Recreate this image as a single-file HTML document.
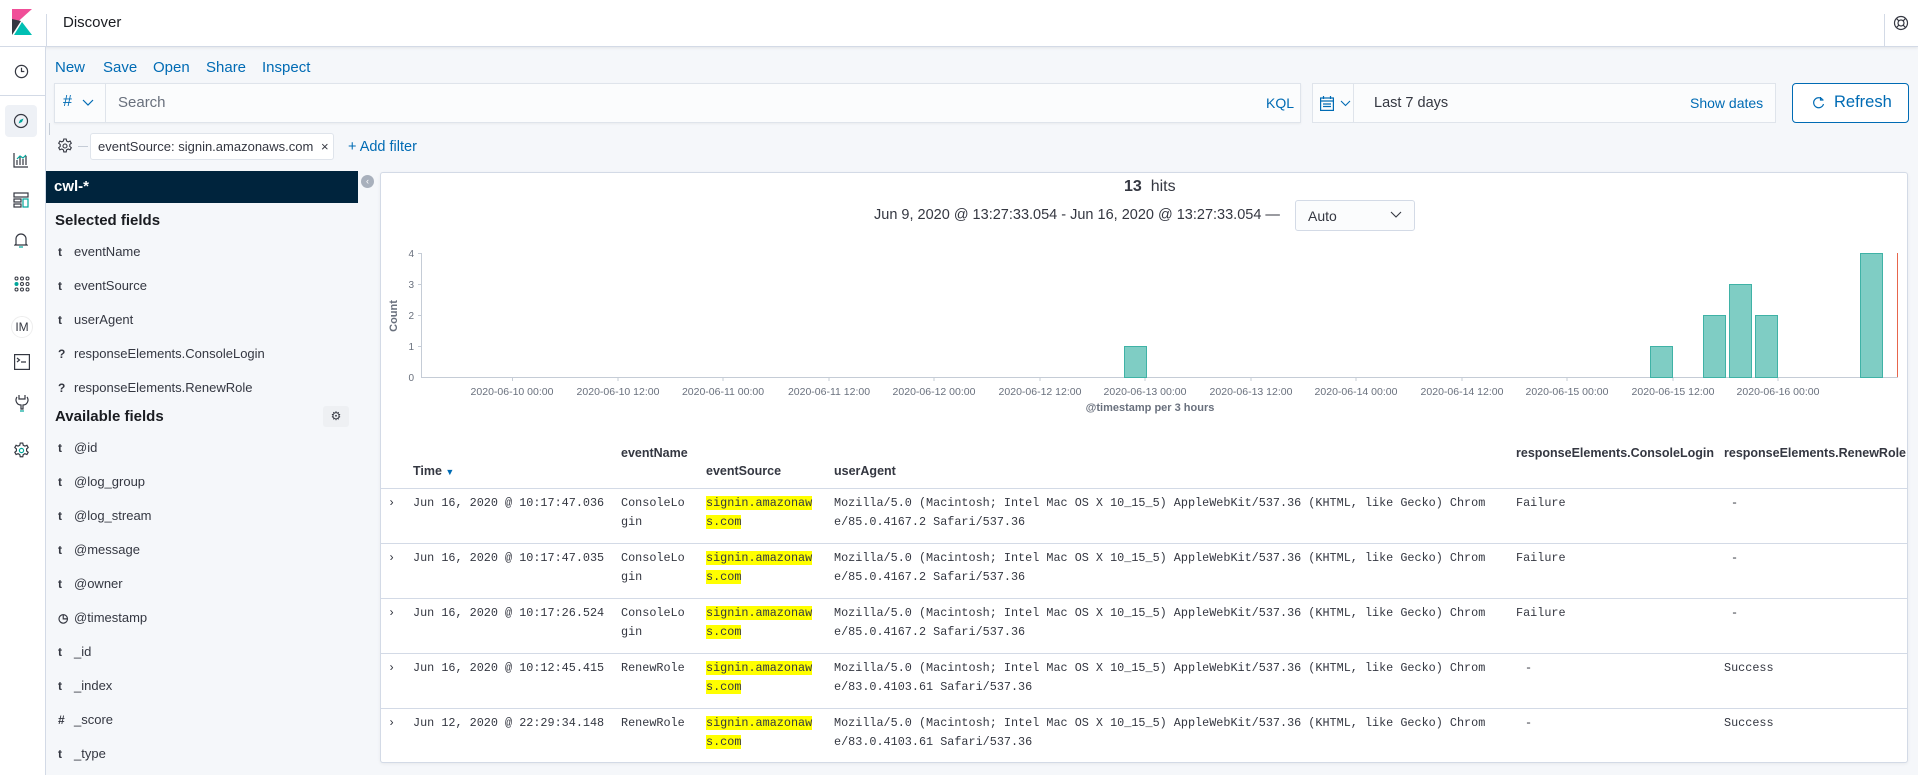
<!DOCTYPE html>
<html><head><meta charset="utf-8"><style>
*{box-sizing:border-box;margin:0;padding:0}
body{width:1918px;height:775px;overflow:hidden;background:#f5f7fa;font-family:"Liberation Sans",sans-serif;color:#343741;position:relative}
.abs{position:absolute}
.hdr{left:0;top:0;width:1918px;height:47px;background:#fff;border-bottom:1px solid #d3dae6;box-shadow:0 1px 3px rgba(0,0,0,.08)}
.nav{left:0;top:47px;width:46px;height:728px;background:#fff;border-right:1px solid #d3dae6}
.link{color:#006bb4;font-size:15px}
.mono{font-family:"Liberation Mono",monospace;font-size:11.8px;line-height:19px;color:#343741}
.hl{background:#ffff00}
.fld{left:58px;font-size:13px;color:#343741}
.fld b{display:inline-block;width:16px;font-size:12px}
.th{font-size:12.5px;font-weight:bold;color:#343741}
.line{height:1px;background:#d3dae6;left:381px;width:1526px}
</style></head><body>
<div class="abs hdr"></div>
<svg class="abs" style="left:12px;top:9px" width="20" height="26" viewBox="0 0 20 26"><polygon points="0,0 20,0 0,18" fill="#f04e98"/><polygon points="0,10 9,12 0,26" fill="#343741"/><polygon points="2,26 20,26 10,13" fill="#00bfb3"/></svg>
<div class="abs" style="left:46px;top:14px;width:1px;height:33px;background:#d3dae6"></div>
<div class="abs" style="left:63px;top:14px;font-size:15px;color:#1a1c21">Discover</div>
<div class="abs" style="left:1884px;top:14px;width:1px;height:33px;background:#d3dae6"></div>
<svg class="abs" style="left:1893px;top:15px" width="16" height="16" viewBox="0 0 16 16" fill="none" stroke="#343741" stroke-width="1.2"><circle cx="8" cy="8" r="6.5"/><circle cx="8" cy="8" r="3"/><path d="M3.5 3.5l2.4 2.4M12.5 3.5l-2.4 2.4M3.5 12.5l2.4-2.4M12.5 12.5l-2.4-2.4"/></svg>

<div class="abs nav"></div>
<div class="abs" style="left:0;top:95px;width:46px;height:1px;background:#d3dae6"></div>
<svg class="abs" style="left:14px;top:64px" width="15" height="15" viewBox="0 0 16 16" fill="none" stroke="#343741" stroke-width="1.3"><circle cx="8" cy="8" r="6.5"/><path d="M8 4v4h3"/></svg>
<div class="abs" style="left:5px;top:105px;width:32px;height:32px;background:#eef1f6;border-radius:4px"></div>
<svg class="abs" style="left:13px;top:113px" width="16" height="16" viewBox="0 0 16 16" fill="none" stroke="#343741" stroke-width="1.2"><circle cx="8" cy="8" r="6.5"/><path d="M10.5 5.5L7 7l-1.5 3.5L9 9z" fill="#00a69b" stroke="none"/></svg>
<svg class="abs" style="left:13px;top:152px" width="16" height="16" viewBox="0 0 16 16" fill="none" stroke="#343741" stroke-width="1.2"><path d="M1 1v14h14"/><path d="M4 13V8M7 13V5M10 13V7M13 13V4" stroke="#343741"/><path d="M4 7l3-3 3 2 3-3" stroke="#00a69b"/></svg>
<svg class="abs" style="left:13px;top:192px" width="16" height="16" viewBox="0 0 16 16" fill="none" stroke="#343741" stroke-width="1.2"><rect x="1" y="1" width="14" height="4"/><rect x="1" y="7" width="7" height="3"/><rect x="1" y="12" width="7" height="3"/><rect x="10" y="7" width="5" height="8" stroke="#00a69b"/></svg>
<svg class="abs" style="left:14px;top:232px" width="14" height="17" viewBox="0 0 14 17" fill="none" stroke="#343741" stroke-width="1.2"><path d="M2 12V7a5 5 0 0110 0v5l1 1H1z"/><path d="M5 15h4" stroke="#00a69b"/></svg>
<svg class="abs" style="left:14px;top:276px" width="16" height="16" viewBox="0 0 16 16" fill="none" stroke="#343741" stroke-width="1"><circle cx="2.5" cy="2.5" r="1.5"/><circle cx="8" cy="2.5" r="1.5"/><circle cx="13.5" cy="2.5" r="1.5"/><circle cx="2.5" cy="8" r="1.5" fill="#00a69b" stroke="#00a69b"/><circle cx="8" cy="8" r="1.5"/><circle cx="13.5" cy="8" r="1.5"/><circle cx="2.5" cy="13.5" r="1.5"/><circle cx="8" cy="13.5" r="1.5"/><circle cx="13.5" cy="13.5" r="1.5"/></svg>
<div class="abs" style="left:11px;top:316px;width:22px;height:22px;border-radius:50%;background:#fff;border:1px solid #eee;font-size:12px;text-align:center;line-height:21px;color:#343741">IM</div>
<svg class="abs" style="left:14px;top:354px" width="16" height="16" viewBox="0 0 16 16" fill="none" stroke="#343741" stroke-width="1.2"><rect x=".6" y=".6" width="14.8" height="14.8"/><path d="M3 4l2.5 2L3 8M7 8h5"/></svg>
<svg class="abs" style="left:15px;top:394px" width="14" height="18" viewBox="0 0 14 18" fill="none" stroke="#343741" stroke-width="1.2"><path d="M4 1v4h6V1M2 3a5 5 0 004 8v4h2v-4a5 5 0 004-8"/><path d="M5 17h4" stroke="#00a69b"/></svg>
<svg class="abs" style="left:13px;top:442px" width="17" height="17" viewBox="0 0 16 16" fill="none" stroke="#343741" stroke-width="1.1"><path d="M6.8 1h2.4l.4 2 1.6.9 1.9-.8 1.2 2.1-1.5 1.3v1.9l1.5 1.3-1.2 2.1-1.9-.8-1.6.9-.4 2H6.8l-.4-2-1.6-.9-1.9.8-1.2-2.1 1.5-1.3V6.5L1.7 5.2l1.2-2.1 1.9.8 1.6-.9z"/><circle cx="8" cy="8" r="2" stroke="#00a69b"/></svg>

<div class="abs link" style="left:55px;top:59px">New</div>
<div class="abs link" style="left:103px;top:59px">Save</div>
<div class="abs link" style="left:153px;top:59px">Open</div>
<div class="abs link" style="left:206px;top:59px">Share</div>
<div class="abs link" style="left:262px;top:59px">Inspect</div>

<div class="abs" style="left:54px;top:83px;width:1247px;height:40px;background:#fbfcfd;border:1px solid #dfe4eb;box-shadow:0 1px 2px rgba(0,0,0,.05)"></div>
<div class="abs" style="left:105px;top:83px;width:1px;height:40px;background:#dfe4eb"></div>
<div class="abs" style="left:63px;top:93px;font-size:16px;color:#006bb4">#</div>
<svg class="abs" style="left:82px;top:99px" width="12" height="8" viewBox="0 0 12 8" fill="none" stroke="#006bb4" stroke-width="1.2"><path d="M1 1l5 5 5-5"/></svg>
<div class="abs" style="left:118px;top:94px;font-size:15px;color:#69707d">Search</div>
<div class="abs link" style="left:1266px;top:95px;font-size:14px">KQL</div>
<div class="abs" style="left:1312px;top:83px;width:464px;height:40px;background:#fbfcfd;border:1px solid #dfe4eb"></div>
<div class="abs" style="left:1353px;top:83px;width:1px;height:40px;background:#dfe4eb"></div>
<svg class="abs" style="left:1320px;top:96px" width="14" height="15" viewBox="0 0 14 15" fill="none" stroke="#006bb4" stroke-width="1.2"><rect x=".6" y="2" width="12.8" height="12.4"/><path d="M.6 5h12.8M3.5 0v3M10.5 0v3M3 8h8M3 10.5h8"/></svg>
<svg class="abs" style="left:1340px;top:100px" width="11" height="7" viewBox="0 0 11 7" fill="none" stroke="#006bb4" stroke-width="1.1"><path d="M1 1l4.5 4.5L10 1"/></svg>
<div class="abs" style="left:1374px;top:95px;font-size:14.5px;color:#343741">Last 7 days</div>
<div class="abs link" style="left:1690px;top:95px;font-size:14px">Show dates</div>
<div class="abs" style="left:1792px;top:83px;width:117px;height:40px;background:#fff;border:1px solid #006bb4;border-radius:4px"></div>
<svg class="abs" style="left:1812px;top:96px" width="13" height="14" viewBox="0 0 13 14" fill="none" stroke="#006bb4" stroke-width="1.2"><path d="M10.5 3.5A5 5 0 1011.5 8"/><path d="M8.5 1v3h3"/></svg>
<div class="abs" style="left:1834px;top:93px;font-size:16.5px;color:#006bb4">Refresh</div>

<div class="abs" style="left:49px;top:123px;width:1px;height:12px;background:#c5ccd6"></div>
<svg class="abs" style="left:57px;top:138px" width="16" height="16" viewBox="0 0 16 16" fill="none" stroke="#343741" stroke-width="1.1"><path d="M6.8 1h2.4l.4 2 1.6.9 1.9-.8 1.2 2.1-1.5 1.3v1.9l1.5 1.3-1.2 2.1-1.9-.8-1.6.9-.4 2H6.8l-.4-2-1.6-.9-1.9.8-1.2-2.1 1.5-1.3V6.5L1.7 5.2l1.2-2.1 1.9.8 1.6-.9z"/><circle cx="8" cy="8" r="2"/></svg>
<div class="abs" style="left:78px;top:146px;width:10px;height:1px;background:#c5ccd6"></div>
<div class="abs" style="left:90px;top:133px;width:244px;height:27px;background:#fff;border:1px solid #dfe4eb;border-radius:3px;font-size:13px;line-height:25px;padding-left:7px;color:#343741">eventSource: signin.amazonaws.com <span style="margin-left:4px">×</span></div>
<div class="abs link" style="left:348px;top:139px;font-size:14.5px">+ Add filter</div>

<div class="abs" style="left:46px;top:171px;width:312px;height:32px;background:#00243d;color:#fff;font-weight:bold;font-size:15px;line-height:32px;padding-left:8px">cwl-*</div>
<div class="abs" style="left:55px;top:212px;font-size:15px;font-weight:bold;color:#1a1c21">Selected fields</div>
<div class="abs fld" style="top:244px"><b>t</b>eventName</div>
<div class="abs fld" style="top:278px"><b>t</b>eventSource</div>
<div class="abs fld" style="top:312px"><b>t</b>userAgent</div>
<div class="abs fld" style="top:346px"><b>?</b>responseElements.ConsoleLogin</div>
<div class="abs fld" style="top:380px"><b>?</b>responseElements.RenewRole</div>
<div class="abs" style="left:55px;top:408px;font-size:15px;font-weight:bold;color:#1a1c21">Available fields</div>
<div class="abs" style="left:323px;top:406px;width:26px;height:21px;background:#eef0f3;border-radius:3px;text-align:center;font-size:12px;line-height:21px">⚙</div>
<div class="abs fld" style="top:440px"><b>t</b>@id</div>
<div class="abs fld" style="top:474px"><b>t</b>@log_group</div>
<div class="abs fld" style="top:508px"><b>t</b>@log_stream</div>
<div class="abs fld" style="top:542px"><b>t</b>@message</div>
<div class="abs fld" style="top:576px"><b>t</b>@owner</div>
<div class="abs fld" style="top:610px"><b>◷</b>@timestamp</div>
<div class="abs fld" style="top:644px"><b>t</b>_id</div>
<div class="abs fld" style="top:678px"><b>t</b>_index</div>
<div class="abs fld" style="top:712px"><b>#</b>_score</div>
<div class="abs fld" style="top:746px"><b>t</b>_type</div>
<div class="abs" style="left:361px;top:175px;width:13px;height:13px;border-radius:50%;background:#a8b0bc;color:#fff;font-size:9px;text-align:center;line-height:13px">‹</div>

<div class="abs" style="left:380px;top:172px;width:1528px;height:591px;background:#fff;border:1px solid #d3dae6;border-radius:3px;box-shadow:0 1px 3px rgba(0,0,0,.06)"></div>
<div class="abs" style="left:1124px;top:178px;font-size:16px;color:#343741"><b>13</b>&nbsp; hits</div>
<div class="abs" style="left:874px;top:207px;font-size:14.5px;color:#343741">Jun 9, 2020 @ 13:27:33.054 - Jun 16, 2020 @ 13:27:33.054 —</div>
<div class="abs" style="left:1295px;top:200px;width:120px;height:31px;background:#fbfcfd;border:1px solid #d3dae6;border-radius:3px;font-size:14px;line-height:30px;padding-left:12px">Auto</div>
<svg class="abs" style="left:1390px;top:211px" width="12" height="8" viewBox="0 0 12 8" fill="none" stroke="#343741" stroke-width="1.1"><path d="M1 1l5 5 5-5"/></svg>

<svg class="abs" style="left:380px;top:240px" width="1528" height="180" viewBox="380 240 1528 180" font-family="Liberation Sans, sans-serif">
<g stroke="#c5ccd6" stroke-width="1"><line x1="421.5" y1="253" x2="421.5" y2="377"/><line x1="421" y1="377.5" x2="1898" y2="377.5"/>
<line x1="418" y1="253.5" x2="421" y2="253.5"/><line x1="418" y1="284.5" x2="421" y2="284.5"/><line x1="418" y1="315.5" x2="421" y2="315.5"/><line x1="418" y1="346.5" x2="421" y2="346.5"/>
<g><line x1="512.5" y1="377" x2="512.5" y2="381"/><line x1="618" y1="377" x2="618" y2="381"/><line x1="723" y1="377" x2="723" y2="381"/><line x1="829" y1="377" x2="829" y2="381"/><line x1="934" y1="377" x2="934" y2="381"/><line x1="1040" y1="377" x2="1040" y2="381"/><line x1="1145" y1="377" x2="1145" y2="381"/><line x1="1251" y1="377" x2="1251" y2="381"/><line x1="1356" y1="377" x2="1356" y2="381"/><line x1="1462" y1="377" x2="1462" y2="381"/><line x1="1567" y1="377" x2="1567" y2="381"/><line x1="1673" y1="377" x2="1673" y2="381"/><line x1="1778" y1="377" x2="1778" y2="381"/></g></g>
<g font-size="10" fill="#69707d" text-anchor="end"><text x="414" y="257">4</text><text x="414" y="288">3</text><text x="414" y="319">2</text><text x="414" y="350">1</text><text x="414" y="381">0</text></g>
<text transform="translate(397,316) rotate(-90)" font-size="11" font-weight="bold" fill="#69707d" text-anchor="middle">Count</text>
<g font-size="10.5" fill="#69707d" text-anchor="middle"><text x="512" y="395">2020-06-10 00:00</text><text x="618" y="395">2020-06-10 12:00</text><text x="723" y="395">2020-06-11 00:00</text><text x="829" y="395">2020-06-11 12:00</text><text x="934" y="395">2020-06-12 00:00</text><text x="1040" y="395">2020-06-12 12:00</text><text x="1145" y="395">2020-06-13 00:00</text><text x="1251" y="395">2020-06-13 12:00</text><text x="1356" y="395">2020-06-14 00:00</text><text x="1462" y="395">2020-06-14 12:00</text><text x="1567" y="395">2020-06-15 00:00</text><text x="1673" y="395">2020-06-15 12:00</text><text x="1778" y="395">2020-06-16 00:00</text></g>
<text x="1150" y="411" font-size="11" font-weight="bold" fill="#69707d" text-anchor="middle">@timestamp per 3 hours</text>
<g fill="#7fcdc4" stroke="#3fb2a6" stroke-width="1"><rect x="1124.5" y="346.5" width="22" height="31"/><rect x="1650.5" y="346.5" width="22" height="31"/><rect x="1703.5" y="315.5" width="22" height="62"/><rect x="1729.5" y="284.5" width="22" height="93"/><rect x="1755.5" y="315.5" width="22" height="62"/><rect x="1860.5" y="253.5" width="22" height="124"/></g>
<line x1="1897.5" y1="253" x2="1897.5" y2="377" stroke="#e7664c" stroke-width="1"/>
</svg>

<div class="abs th" style="left:413px;top:464px">Time <span style="color:#006bb4;font-size:9px">▼</span></div>
<div class="abs th" style="left:621px;top:446px">eventName</div>
<div class="abs th" style="left:706px;top:464px">eventSource</div>
<div class="abs th" style="left:834px;top:464px">userAgent</div>
<div class="abs th" style="left:1516px;top:446px">responseElements.ConsoleLogin</div>
<div class="abs th" style="left:1724px;top:446px">responseElements.RenewRole</div>
<div class="abs line" style="top:488px"></div>
<div class="abs line" style="top:543px"></div>
<div class="abs line" style="top:598px"></div>
<div class="abs line" style="top:653px"></div>
<div class="abs line" style="top:708px"></div>

<div class="abs mono" style="left:388px;top:494px;width:1520px;height:50px">
<span class="abs" style="left:0">›</span><span class="abs" style="left:25px">Jun 16, 2020 @ 10:17:47.036</span><span class="abs" style="left:233px">ConsoleLo<br>gin</span><span class="abs" style="left:318px"><span class="hl">signin.amazonaw</span><br><span class="hl">s.com</span></span><span class="abs" style="left:446px">Mozilla/5.0 (Macintosh; Intel Mac OS X 10_15_5) AppleWebKit/537.36 (KHTML, like Gecko) Chrom<br>e/85.0.4167.2 Safari/537.36</span><span class="abs" style="left:1128px">Failure</span><span class="abs" style="left:1343px">-</span></div>
<div class="abs mono" style="left:388px;top:549px;width:1520px;height:50px">
<span class="abs" style="left:0">›</span><span class="abs" style="left:25px">Jun 16, 2020 @ 10:17:47.035</span><span class="abs" style="left:233px">ConsoleLo<br>gin</span><span class="abs" style="left:318px"><span class="hl">signin.amazonaw</span><br><span class="hl">s.com</span></span><span class="abs" style="left:446px">Mozilla/5.0 (Macintosh; Intel Mac OS X 10_15_5) AppleWebKit/537.36 (KHTML, like Gecko) Chrom<br>e/85.0.4167.2 Safari/537.36</span><span class="abs" style="left:1128px">Failure</span><span class="abs" style="left:1343px">-</span></div>
<div class="abs mono" style="left:388px;top:604px;width:1520px;height:50px">
<span class="abs" style="left:0">›</span><span class="abs" style="left:25px">Jun 16, 2020 @ 10:17:26.524</span><span class="abs" style="left:233px">ConsoleLo<br>gin</span><span class="abs" style="left:318px"><span class="hl">signin.amazonaw</span><br><span class="hl">s.com</span></span><span class="abs" style="left:446px">Mozilla/5.0 (Macintosh; Intel Mac OS X 10_15_5) AppleWebKit/537.36 (KHTML, like Gecko) Chrom<br>e/85.0.4167.2 Safari/537.36</span><span class="abs" style="left:1128px">Failure</span><span class="abs" style="left:1343px">-</span></div>
<div class="abs mono" style="left:388px;top:659px;width:1520px;height:50px">
<span class="abs" style="left:0">›</span><span class="abs" style="left:25px">Jun 16, 2020 @ 10:12:45.415</span><span class="abs" style="left:233px">RenewRole</span><span class="abs" style="left:318px"><span class="hl">signin.amazonaw</span><br><span class="hl">s.com</span></span><span class="abs" style="left:446px">Mozilla/5.0 (Macintosh; Intel Mac OS X 10_15_5) AppleWebKit/537.36 (KHTML, like Gecko) Chrom<br>e/83.0.4103.61 Safari/537.36</span><span class="abs" style="left:1137px">-</span><span class="abs" style="left:1336px">Success</span></div>
<div class="abs mono" style="left:388px;top:714px;width:1520px;height:50px">
<span class="abs" style="left:0">›</span><span class="abs" style="left:25px">Jun 12, 2020 @ 22:29:34.148</span><span class="abs" style="left:233px">RenewRole</span><span class="abs" style="left:318px"><span class="hl">signin.amazonaw</span><br><span class="hl">s.com</span></span><span class="abs" style="left:446px">Mozilla/5.0 (Macintosh; Intel Mac OS X 10_15_5) AppleWebKit/537.36 (KHTML, like Gecko) Chrom<br>e/83.0.4103.61 Safari/537.36</span><span class="abs" style="left:1137px">-</span><span class="abs" style="left:1336px">Success</span></div>
</body></html>
